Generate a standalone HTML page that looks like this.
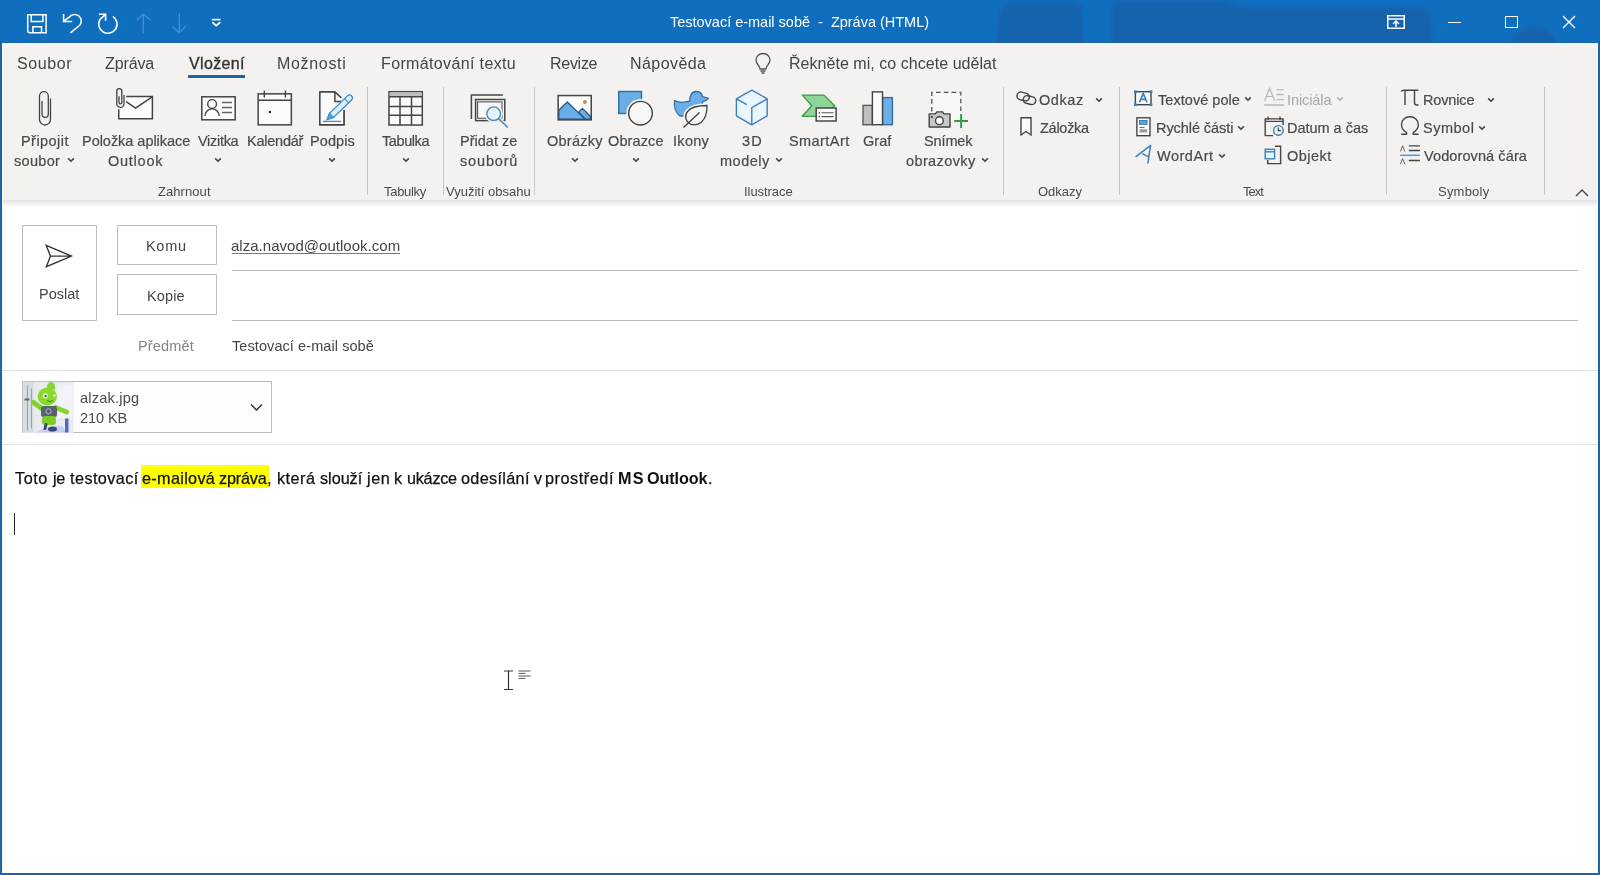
<!DOCTYPE html>
<html><head><meta charset="utf-8"><style>
html,body{margin:0;padding:0;width:1600px;height:875px;overflow:hidden;background:#fff;position:relative;font-family:'Liberation Sans', sans-serif}
.t{position:absolute;line-height:0;white-space:pre;will-change:transform}
svg{overflow:visible}
</style></head><body>
<div style="position:absolute;left:0px;top:0px;width:1600px;height:43px;background:#106ebe"></div>
<svg style="position:absolute;left:0px;top:0px;" width="1600" height="43" viewBox="0 0 1600 43" fill="none"><defs><filter id="tbl" x="-5%" y="-50%" width="110%" height="200%"><feGaussianBlur stdDeviation="1.5"/></filter></defs><g fill="#1564ad" filter="url(#tbl)"><path d="M1083 43 V8 Q1083 3 1060 3 H1015 Q997 3 997 25 V43 Z"/><path d="M1111 43 V12 Q1111 1 1125 1 H1221 L1250 8 H1420 Q1432 8 1432 25 V43 Z"/><path d="M1512 43 A22 16 0 0 1 1556 43 Z"/></g></svg>
<svg style="position:absolute;left:1386px;top:14px;" width="20" height="16" viewBox="0 0 20 16" fill="none"><rect x="1.75" y="1.75" width="16.5" height="12.5" stroke="#ffffff" stroke-width="1.5"/><path d="M2 5 H18" stroke="#ffffff" stroke-width="1.5"/><path d="M10 13 V7 M7 10 L10 7 L13 10" stroke="#ffffff" stroke-width="1.5"/></svg>
<div style="position:absolute;left:1448px;top:22px;width:13px;height:1.4px;background:#fff"></div>
<div style="position:absolute;left:1505px;top:16px;width:13px;height:12px;border:1.4px solid #fff;box-sizing:border-box"></div>
<svg style="position:absolute;left:1562px;top:15px;" width="14" height="14" viewBox="0 0 14 14" fill="none"><path d="M1 1 L13 13 M13 1 L1 13" stroke="#ffffff" stroke-width="1.4"/></svg>
<div style="position:absolute;left:0px;top:42px;width:1600px;height:1px;background:#1a62a6"></div>
<div style="position:absolute;left:0px;top:43px;width:2px;height:832px;background:#1f64a4"></div>
<div style="position:absolute;left:1598px;top:43px;width:2px;height:832px;background:#1f64a4"></div>
<div style="position:absolute;left:0px;top:873px;width:1600px;height:2px;background:#1f64a4"></div>
<div style="position:absolute;left:2px;top:43px;width:1596px;height:157px;background:#f3f2f1"></div>
<div style="position:absolute;left:2px;top:43px;width:1596px;height:1px;background:#eaf6fb"></div>
<div style="position:absolute;left:2px;top:200px;width:1596px;height:7px;background:linear-gradient(#e2e1e0,#fff)"></div>
<div style="position:absolute;left:188px;top:75px;width:57px;height:3px;background:#1a64b4"></div>
<svg style="position:absolute;left:754px;top:52px;" width="18" height="22" viewBox="0 0 18 22" fill="none"><path d="M9 1.5 C4.8 1.5 2 4.5 2 8 C2 10.5 3.2 12 4.5 13.5 C5.5 14.6 6 15.5 6 17 H12 C12 15.5 12.5 14.6 13.5 13.5 C14.8 12 16 10.5 16 8 C16 4.5 13.2 1.5 9 1.5 Z" stroke="#555" stroke-width="1.3"/><path d="M6.5 19 H11.5 M7.5 21 H10.5" stroke="#555" stroke-width="1.3"/></svg>
<div style="position:absolute;left:367px;top:87px;width:1px;height:108px;background:#c8c6c4"></div>
<div style="position:absolute;left:442.5px;top:87px;width:1px;height:108px;background:#c8c6c4"></div>
<div style="position:absolute;left:534px;top:87px;width:1px;height:108px;background:#c8c6c4"></div>
<div style="position:absolute;left:1002.5px;top:87px;width:1px;height:108px;background:#c8c6c4"></div>
<div style="position:absolute;left:1119px;top:87px;width:1px;height:108px;background:#c8c6c4"></div>
<div style="position:absolute;left:1386px;top:87px;width:1px;height:108px;background:#c8c6c4"></div>
<div style="position:absolute;left:1544px;top:87px;width:1px;height:108px;background:#c8c6c4"></div>
<svg style="position:absolute;left:66.5px;top:157px;" width="8" height="6" viewBox="0 0 8 6" fill="none"><path d="M1.2 1.4 L4 4.2 L6.8 1.4" stroke="#444" stroke-width="1.6"/></svg>
<svg style="position:absolute;left:214px;top:157px;" width="8" height="6" viewBox="0 0 8 6" fill="none"><path d="M1.2 1.4 L4 4.2 L6.8 1.4" stroke="#444" stroke-width="1.6"/></svg>
<svg style="position:absolute;left:328px;top:157px;" width="8" height="6" viewBox="0 0 8 6" fill="none"><path d="M1.2 1.4 L4 4.2 L6.8 1.4" stroke="#444" stroke-width="1.6"/></svg>
<svg style="position:absolute;left:401.5px;top:157px;" width="8" height="6" viewBox="0 0 8 6" fill="none"><path d="M1.2 1.4 L4 4.2 L6.8 1.4" stroke="#444" stroke-width="1.6"/></svg>
<svg style="position:absolute;left:570.5px;top:157px;" width="8" height="6" viewBox="0 0 8 6" fill="none"><path d="M1.2 1.4 L4 4.2 L6.8 1.4" stroke="#444" stroke-width="1.6"/></svg>
<svg style="position:absolute;left:631.5px;top:157px;" width="8" height="6" viewBox="0 0 8 6" fill="none"><path d="M1.2 1.4 L4 4.2 L6.8 1.4" stroke="#444" stroke-width="1.6"/></svg>
<svg style="position:absolute;left:774.5px;top:157px;" width="8" height="6" viewBox="0 0 8 6" fill="none"><path d="M1.2 1.4 L4 4.2 L6.8 1.4" stroke="#444" stroke-width="1.6"/></svg>
<svg style="position:absolute;left:980.5px;top:157px;" width="8" height="6" viewBox="0 0 8 6" fill="none"><path d="M1.2 1.4 L4 4.2 L6.8 1.4" stroke="#444" stroke-width="1.6"/></svg>
<svg style="position:absolute;left:1575px;top:188px;" width="14" height="9" viewBox="0 0 14 9" fill="none"><path d="M1 8 L7 2 L13 8" stroke="#444" stroke-width="1.4"/></svg>
<svg style="position:absolute;left:1094.5px;top:96.5px;" width="8" height="6" viewBox="0 0 8 6" fill="none"><path d="M1.2 1.4 L4 4.2 L6.8 1.4" stroke="#444" stroke-width="1.6"/></svg>
<svg style="position:absolute;left:1244px;top:96px;" width="8" height="6" viewBox="0 0 8 6" fill="none"><path d="M1.2 1.4 L4 4.2 L6.8 1.4" stroke="#444" stroke-width="1.6"/></svg>
<svg style="position:absolute;left:1237px;top:124.5px;" width="8" height="6" viewBox="0 0 8 6" fill="none"><path d="M1.2 1.4 L4 4.2 L6.8 1.4" stroke="#444" stroke-width="1.6"/></svg>
<svg style="position:absolute;left:1218px;top:152.5px;" width="8" height="6" viewBox="0 0 8 6" fill="none"><path d="M1.2 1.4 L4 4.2 L6.8 1.4" stroke="#444" stroke-width="1.6"/></svg>
<svg style="position:absolute;left:1486.5px;top:96.5px;" width="8" height="6" viewBox="0 0 8 6" fill="none"><path d="M1.2 1.4 L4 4.2 L6.8 1.4" stroke="#444" stroke-width="1.6"/></svg>
<svg style="position:absolute;left:1478px;top:124.5px;" width="8" height="6" viewBox="0 0 8 6" fill="none"><path d="M1.2 1.4 L4 4.2 L6.8 1.4" stroke="#444" stroke-width="1.6"/></svg>
<svg style="position:absolute;left:1336px;top:96px;" width="8" height="6" viewBox="0 0 8 6" fill="none"><path d="M1.2 1.4 L4 4.2 L6.8 1.4" stroke="#b0b0b0" stroke-width="1.6"/></svg>
<div style="position:absolute;left:2px;top:207px;width:1596px;height:666px;background:#fff"></div>
<div style="position:absolute;left:2px;top:200px;width:1px;height:673px;background:#eefaff"></div>
<div style="position:absolute;left:1597px;top:200px;width:1px;height:673px;background:#eefaff"></div>
<div style="position:absolute;left:22px;top:225px;width:75px;height:96px;border:1px solid #bdbdbd;box-sizing:border-box"></div>
<div style="position:absolute;left:117px;top:225px;width:100px;height:40px;border:1px solid #bdbdbd;box-sizing:border-box"></div>
<div style="position:absolute;left:117px;top:274px;width:100px;height:41px;border:1px solid #bdbdbd;box-sizing:border-box"></div>
<div style="position:absolute;left:232px;top:253px;width:168px;height:1px;background:#777"></div>
<div style="position:absolute;left:232px;top:270px;width:1346px;height:1px;background:#b9b9b9"></div>
<div style="position:absolute;left:232px;top:320px;width:1346px;height:1px;background:#b9b9b9"></div>
<div style="position:absolute;left:2px;top:370px;width:1596px;height:1px;background:#e3e3e3"></div>
<div style="position:absolute;left:22px;top:381px;width:250px;height:52px;border:1px solid #bdbdbd;box-sizing:border-box;background:#fdfdfd"></div>
<svg style="position:absolute;left:250px;top:403px;" width="13" height="9" viewBox="0 0 13 9" fill="none"><path d="M1 1.5 L6.5 7 L12 1.5" stroke="#333" stroke-width="1.5"/></svg>
<svg style="position:absolute;left:22.5px;top:381.5px;" width="50.5" height="51" viewBox="22.5 381.5 50.5 51" fill="none"><defs><filter id="tb" x="-10%" y="-10%" width="120%" height="120%"><feGaussianBlur stdDeviation="0.6"/></filter></defs><rect x="22.5" y="381.5" width="50.5" height="51" fill="#e8eaef"/><g filter="url(#tb)"><rect x="23" y="382" width="10" height="50" fill="#d8dbe0"/><path d="M27 385 V430 M31 388 V428" stroke="#9aa0a8" stroke-width="1"/><path d="M24 399 H29" stroke="#666" stroke-width="2"/><rect x="57" y="384" width="15" height="34" fill="#f2f3f7"/><path d="M36 432 Q48 424 62 426 L66 432 Z" fill="#c4cdf2"/><rect x="64.5" y="418" width="3.5" height="14" fill="#4d6cc8"/><path d="M46.5 389 Q46 381.5 50.5 381.5 Q55 381.5 54.6 389 Z" fill="#86d62e"/><ellipse cx="46.8" cy="396" rx="9.6" ry="9" fill="#8ad82f"/><path d="M33 402 L42 408.5" stroke="#82d02c" stroke-width="5" stroke-linecap="round"/><path d="M55 407 L66 411.5" stroke="#86d42e" stroke-width="5" stroke-linecap="round"/><rect x="40.5" y="405.5" width="16" height="11" rx="2.5" fill="#596370"/><circle cx="48" cy="410.8" r="2.6" stroke="#b8bccc" stroke-width="0.9"/><rect x="41.5" y="415.5" width="14" height="9" rx="3.5" fill="#7ccd28"/><path d="M45.5 424 L44.5 428" stroke="#3a4878" stroke-width="3" stroke-linecap="round"/><ellipse cx="52" cy="428.5" rx="4.5" ry="2.6" fill="#3a4878"/></g><circle cx="44.8" cy="395.3" r="2.6" fill="#e6f6d2"/><circle cx="45.2" cy="395.6" r="1.1" fill="#3a4450"/><circle cx="54" cy="395" r="1.3" fill="#d8f0c0"/><path d="M46.5 400 Q49.5 402.5 52.5 400" stroke="#3f7a10" stroke-width="0.9"/></svg>
<div style="position:absolute;left:2px;top:444px;width:1596px;height:1px;background:#e3e3e3"></div>
<div style="position:absolute;left:141px;top:465px;width:127.5px;height:22.5px;background:#ffff00"></div>
<div style="position:absolute;left:14px;top:513px;width:1px;height:22px;background:#222"></div>
<svg style="position:absolute;left:503px;top:670px;" width="30" height="21" viewBox="0 0 30 21" fill="none"><path d="M1 1 H10 M5.5 1 V19.5 M1 19.5 H10" stroke="#333" stroke-width="1.2"/><path d="M15.5 1 H27.5 M15.5 3.4 H22.5 M15.5 6 H27.5 M15.5 8.4 H22.5" stroke="#444" stroke-width="0.9"/></svg>
<svg style="position:absolute;left:0;top:0" width="1600" height="875" viewBox="0 0 1600 875" fill="none"><path d="M27.7 14.7 H46.1 V32.8 H30 Q27.7 32.8 27.7 30.5 Z" stroke="#fff" stroke-width="1.5"/><path d="M31.2 14.7 V21.4 H42.9 V14.7 M32.9 32.8 V26.8 H41.5 V32.8" stroke="#fff" stroke-width="1.5"/><path d="M63.6 13.9 V21.5 H72.2" stroke="#fff" stroke-width="1.6"/><path d="M64.2 20.9 L69.6 16.8 A6.6 6.6 0 0 1 79.7 25.3 L70.5 32.8" stroke="#fff" stroke-width="1.6"/><path d="M112.9 16.4 A9.2 9.2 0 1 1 99.9 19.5 L105.3 14.6" stroke="#fff" stroke-width="1.6"/><path d="M98.9 14.3 H105.6 V20.8" stroke="#fff" stroke-width="1.6"/><path d="M143.3 14 V33.3 M136.8 20.3 L143.3 13.9 L150.5 20.3" stroke="#3f8fdc" stroke-width="1.4"/><path d="M179.3 13.3 V32.7 M172.4 26.4 L179.3 32.7 L185.5 26.4" stroke="#3f8fdc" stroke-width="1.4"/><path d="M211.7 19.6 H220.5" stroke="#fff" stroke-width="1.6"/><path d="M212.3 22.2 L216.2 25.6 L220.2 22.2" stroke="#fff" stroke-width="1.8"/><path d="M50.5 98.6 V119.5 A5.5 5.5 0 0 1 39.5 119.5 V96 A4.4 4.4 0 0 1 48.3 96 V114.3 A3.15 3.15 0 0 1 42 114.3 V101" stroke="#444" stroke-width="1.3"/><path d="M126.2 96.5 H152.4 V118.8 H118.75 V109.3" stroke="#444" stroke-width="1.5" fill="#fbfbfb"/><path d="M118.75 109.3 V96.5 H126.2" fill="#fbfbfb"/><path d="M126.2 101.7 L135.6 108 L152.2 96.8" stroke="#444" stroke-width="1.5"/><path d="M124 95 V103.8 A3.6 3.6 0 0 1 116.8 103.8 V91.2 A2.5 2.5 0 0 1 121.8 91.2 V102.5 A1.4 1.4 0 0 1 119 102.5 V96.3" stroke="#444" stroke-width="1.3"/><rect x="201.8" y="96.8" width="33.4" height="23" fill="#fbfbfb" stroke="#444" stroke-width="1.5"/><circle cx="212.1" cy="104" r="4.4" stroke="#444" stroke-width="1.4"/><path d="M205 116 A7.1 7.1 0 0 1 219.2 116" stroke="#444" stroke-width="1.4"/><path d="M222 102.5 H232 M222 107.5 H232 M222 112.5 H232" stroke="#666" stroke-width="1.3"/><rect x="258.15" y="93.85" width="33.2" height="31" fill="#fbfbfb" stroke="#444" stroke-width="1.5"/><path d="M258 100.3 H291.5 M264.3 90.8 V97.4 M285.4 90.8 V97.4" stroke="#444" stroke-width="1.5"/><circle cx="269.9" cy="112" r="1.2" fill="#222"/><path d="M341.1 97.7 L334.9 92 H319.85 V124.85 H343.95 V110" stroke="#444" stroke-width="1.5" fill="#fbfbfb"/><path d="M319.85 92 V124.85 H343.95 V100 L334.9 92 Z" fill="#fbfbfb"/><path d="M341.1 97.7 L334.9 92 H319.85 V124.85 H343.95 V110 M334.9 92 V101.5 H341" stroke="#444" stroke-width="1.5"/><path d="M323 121.4 H341" stroke="#3d8fd0" stroke-width="1.3"/><g transform="translate(327.2,119.5) rotate(-44)"><path d="M0 0 L6 -2.9 H31 A2.9 2.9 0 0 1 31 2.9 H6 Z" fill="#d9effc" stroke="#3a8ccc" stroke-width="1.3"/><path d="M0 0 L6 -2.9 V2.9 Z" fill="#5aa2dc" stroke="#3a8ccc" stroke-width="1"/><path d="M27 -2.9 V2.9" stroke="#3a8ccc" stroke-width="1.2"/></g><rect x="389" y="91.7" width="33.3" height="33.3" fill="#fbfbfb" stroke="#444" stroke-width="1.5"/><rect x="389.7" y="92.4" width="31.9" height="4.2" fill="#bdbdbd"/><path d="M389 96.8 H422.3 M389 106.4 H422.3 M389 115.2 H422.3 M400 96.8 V125 M411.5 96.8 V125" stroke="#444" stroke-width="1.5"/><path d="M471.4 119.1 V95.1 H502.9" stroke="#444" stroke-width="1.5"/><rect x="475.6" y="99.5" width="29.2" height="21.1" stroke="#444" stroke-width="1.5" fill="#f8f8f8"/><rect x="477.6" y="101.9" width="24.4" height="16.3" stroke="#444" stroke-width="1"/><circle cx="493.7" cy="113.7" r="9" fill="#f3f2f1"/><path d="M499 119 L507.7 127.4" stroke="#f3f2f1" stroke-width="4"/><circle cx="493.7" cy="113.7" r="6.8" fill="#e3f4fc" stroke="#4b8bb8" stroke-width="1.4"/><path d="M498.6 118.6 L507.7 127.4" stroke="#4b8bb8" stroke-width="1.5"/><rect x="558.15" y="95.55" width="33.1" height="24.3" fill="#fbfbfb" stroke="#444" stroke-width="1.5"/><path d="M558.9 110 L567.3 102 L585 119.1 H558.9 Z" fill="#6aaee8" stroke="#25537d" stroke-width="1.2" stroke-linejoin="round"/><path d="M578.7 112.1 L582.4 108.4 L590.5 116.5 V119.1 H585.5 Z" fill="#6aaee8" stroke="#25537d" stroke-width="1.2" stroke-linejoin="round"/><path d="M558.9 119.1 H590.5" stroke="#25537d" stroke-width="0.1"/><circle cx="584.9" cy="102" r="2" fill="#c58a4d"/><rect x="618.7" y="91.5" width="22.8" height="22" fill="#6aaee8" stroke="#2f6fa8" stroke-width="1.4"/><circle cx="640.5" cy="113.2" r="14.2" fill="#f3f2f1"/><circle cx="640.5" cy="113.2" r="11.8" fill="#f7f7f7" stroke="#404040" stroke-width="1.4"/><path d="M674.5 100.6 C678 102.5 683 103 689.8 101.2 C689.2 96 692 91.5 696 91.5 C700 91.5 702 94 702.5 96.5 L708.3 98.3 C706.5 100.5 704 101.5 702.5 101.8 C703 108 699 113.5 692 115.8 L680 116 C676 113 673.5 107 674.5 100.6 Z" fill="#6aaee8" stroke="#2f6fa8" stroke-width="1.3" stroke-linejoin="round"/><path d="M707 105.5 C699 105.5 691 107 687.5 111.5 C684 116 686 122 690 123.8 C695 126 701 124 704 119 C706.5 115 707 110 707 105.5 Z" fill="#f3f2f1" stroke="#f3f2f1" stroke-width="4.5"/><path d="M707 105.5 C699 105.5 691 107 687.5 111.5 C684 116 686 122 690 123.8 C695 126 701 124 704 119 C706.5 115 707 110 707 105.5 Z" fill="#f7f7f7" stroke="#404040" stroke-width="1.3"/><path d="M683.5 127.5 L699.5 112.5" stroke="#404040" stroke-width="1.3"/><path d="M751.8 90.1 L767.2 98.8 V115.8 L751.8 124.9 L736.4 115.8 V98.8 Z" fill="#eaf6fd" stroke="#3f7fbf" stroke-width="1.4" stroke-linejoin="round"/><path d="M767.2 98.8 L751.8 107.6 V124.9 M736.4 98.8 L746.8 104.7" stroke="#3f7fbf" stroke-width="1.4"/><path d="M802.3 95.1 H824 L834.7 105.7 L824 116.3 H802.3 L811.8 105.7 Z" fill="#8fd49a" stroke="#3a9a4a" stroke-width="1.3" stroke-linejoin="round"/><rect x="816.2" y="108" width="19.9" height="13" fill="#fbfbfb" stroke="#444" stroke-width="1.5"/><circle cx="819.4" cy="112.8" r="0.8" fill="#444"/><circle cx="819.4" cy="116.6" r="0.8" fill="#444"/><path d="M821.4 112.8 H833.6 M821.4 116.6 H833.6" stroke="#555" stroke-width="1.1"/><rect x="863" y="105.4" width="9.4" height="19.3" fill="#bfbfbf" stroke="#5a5a5a" stroke-width="1.4"/><rect x="882.5" y="97.6" width="9.9" height="27.1" fill="#6bb0ea" stroke="#2e6ea6" stroke-width="1.4"/><rect x="872.4" y="91.9" width="10.1" height="32.8" fill="#fbfbfb" stroke="#444" stroke-width="1.4"/><rect x="931.8" y="92.3" width="29" height="28" fill="#f8f8f8"/><path d="M931.8 111.5 V92.3 H960.8 V113" stroke="#555" stroke-width="1.3" stroke-dasharray="4.6 3.2"/><path d="M929.2 113.9 H935.4 L936.8 111.9 H942.6 L944 113.9 H950 V127 H929.2 Z" fill="#c8c8c8" stroke="#404040" stroke-width="1.4" stroke-linejoin="round"/><circle cx="939.4" cy="120.7" r="3.9" fill="#fbfbfb" stroke="#404040" stroke-width="1.4"/><circle cx="931.9" cy="116.9" r="1" fill="#222"/><path d="M954.2 121 H968 M961.1 114.1 V127.9" stroke="#2e9a45" stroke-width="1.9"/><g transform="rotate(14 1023.2 96.45)"><rect x="1016.9" y="92.6" width="12.6" height="7.7" rx="3.85" stroke="#444" stroke-width="1.4"/></g><g transform="rotate(14 1029.5 100.1)"><rect x="1023.2" y="96.2" width="12.6" height="7.8" rx="3.9" stroke="#444" stroke-width="1.4"/></g><path d="M1021 117.8 H1031 V135 L1026 131.5 L1021 135 Z" fill="#fbfbfb" stroke="#444" stroke-width="1.4" stroke-linejoin="miter"/><rect x="1135.4" y="91.7" width="15.6" height="13" stroke="#444" stroke-width="1.4" fill="#fbfbfb"/><path d="M1139.6 102.3 L1143.25 93.4 L1146.9 102.3 M1140.8 99.3 H1145.7" stroke="#3b82c0" stroke-width="1.7"/><rect x="1134.0" y="90.3" width="2.8" height="2.8" fill="#3b82c0"/><rect x="1149.6" y="90.3" width="2.8" height="2.8" fill="#3b82c0"/><rect x="1134.0" y="103.3" width="2.8" height="2.8" fill="#3b82c0"/><rect x="1149.6" y="103.3" width="2.8" height="2.8" fill="#3b82c0"/><rect x="1136.9" y="117.8" width="13.1" height="17.9" fill="#fbfbfb" stroke="#444" stroke-width="1.4"/><rect x="1139.5" y="120.5" width="7.6" height="3.8" fill="#5aa2dc" stroke="#2f6fa8" stroke-width="0.8"/><path d="M1139.5 127.5 H1144.5" stroke="#3b82c0" stroke-width="1.1"/><rect x="1139.5" y="129.3" width="7.6" height="3.2" fill="#999"/><path d="M1135.6 156.8 L1150.6 145.4 L1147.8 163.6 M1142.2 153.6 L1148.4 156.6" stroke="#3b82c0" stroke-width="1.5" stroke-linejoin="round"/><path d="M1264.6 100.7 L1269.6 88.4 L1274.7 100.7 M1266.3 96.5 H1273" stroke="#b8b8b8" stroke-width="1.2"/><path d="M1276.5 89.7 H1283.8 M1276.5 94.5 H1283.8 M1276.5 99.7 H1283.8 M1264.2 105 H1283.8" stroke="#b8b8b8" stroke-width="1.3"/><path d="M1273 135.6 H1265.2 V118.9 H1283.1 V125" stroke="#444" stroke-width="1.4"/><path d="M1265.2 121.3 H1283.1 M1268 116.5 V120 M1280 116.5 V120" stroke="#444" stroke-width="1.3"/><circle cx="1278.4" cy="130.4" r="4.8" fill="#e3f4fc" stroke="#3d7fa8" stroke-width="1.4"/><path d="M1278.3 127.6 V130.6 H1280.8" stroke="#333" stroke-width="1.1"/><path d="M1267.7 160 V163.6 H1280.6 V146.3 H1275" stroke="#444" stroke-width="1.4"/><rect x="1265.2" y="149.3" width="9.4" height="9.5" fill="#e3f4fc" stroke="#3b82c0" stroke-width="1.4"/><path d="M1265.2 151.8 H1274.6" stroke="#3b82c0" stroke-width="1.4"/><path d="M1401.2 91.5 Q1402 90.2 1404 90.2 H1418.3 M1405 90.2 V105 M1414.5 90.2 V103 Q1414.5 105 1417 105 H1418.5" stroke="#444" stroke-width="1.4"/><path d="M1401.2 134.3 H1406.5 V132.5 C1403 130.5 1401.5 127.5 1401.5 124.5 C1401.5 120 1405 116.8 1409.9 116.8 C1414.8 116.8 1418.3 120 1418.3 124.5 C1418.3 127.5 1416.8 130.5 1413.3 132.5 V134.3 H1418.6" stroke="#444" stroke-width="1.4"/><path d="M1400.4 151.5 L1402.6 145.8 L1404.8 151.5 M1400.3 164.3 L1402.6 158.6 L1404.9 164.3" stroke="#555" stroke-width="0.9"/><path d="M1408.8 145.9 H1419.9 M1408.8 150.5 H1419.9 M1408.8 160.5 H1419.9" stroke="#444" stroke-width="1.3"/><path d="M1400.2 155.3 H1419.9" stroke="#4a9ad4" stroke-width="1.5"/><path d="M46.2 245.4 L71.5 256.1 L46.4 266.6 L50.5 256.1 Z M50.5 256.1 H71.5" stroke="#333" stroke-width="1.4" stroke-linejoin="miter"/></svg>
<div class="t" style="left:670.40px;top:22.32px;font-size:14.5px;color:#fff;font-weight:400;letter-spacing:-0.011px;">Testovací e-mail sobě  -  Zpráva (HTML)</div>
<div class="t" style="left:17.00px;top:63.80px;font-size:16px;color:#444;font-weight:400;letter-spacing:0.600px;">Soubor</div>
<div class="t" style="left:105.00px;top:63.80px;font-size:16px;color:#444;font-weight:400;letter-spacing:-0.120px;">Zpráva</div>
<div class="t" style="left:188.50px;top:63.80px;font-size:16px;color:#333;font-weight:400;letter-spacing:0.367px;-webkit-text-stroke:0.35px #333;">Vložení</div>
<div class="t" style="left:277.00px;top:63.80px;font-size:16px;color:#444;font-weight:400;letter-spacing:0.671px;">Možnosti</div>
<div class="t" style="left:380.90px;top:63.80px;font-size:16px;color:#444;font-weight:400;letter-spacing:0.363px;">Formátování textu</div>
<div class="t" style="left:550.00px;top:63.80px;font-size:16px;color:#444;font-weight:400;letter-spacing:-0.280px;">Revize</div>
<div class="t" style="left:629.50px;top:63.80px;font-size:16px;color:#444;font-weight:400;letter-spacing:0.429px;">Nápověda</div>
<div class="t" style="left:788.50px;top:63.80px;font-size:16px;color:#444;font-weight:400;letter-spacing:0.041px;">Řekněte mi, co chcete udělat</div>
<div class="t" style="left:21.30px;top:141.12px;font-size:14.5px;color:#4a4a4a;font-weight:400;letter-spacing:0.443px;-webkit-text-stroke:0.2px #4a4a4a;">Připojit</div>
<div class="t" style="left:13.80px;top:161.12px;font-size:14.5px;color:#4a4a4a;font-weight:400;letter-spacing:0.320px;-webkit-text-stroke:0.2px #4a4a4a;">soubor</div>
<div class="t" style="left:81.50px;top:141.12px;font-size:14.5px;color:#4a4a4a;font-weight:400;letter-spacing:-0.033px;-webkit-text-stroke:0.2px #4a4a4a;">Položka aplikace</div>
<div class="t" style="left:107.50px;top:161.12px;font-size:14.5px;color:#4a4a4a;font-weight:400;letter-spacing:0.750px;-webkit-text-stroke:0.2px #4a4a4a;">Outlook</div>
<div class="t" style="left:197.50px;top:141.12px;font-size:14.5px;color:#4a4a4a;font-weight:400;letter-spacing:-0.300px;-webkit-text-stroke:0.2px #4a4a4a;">Vizitka</div>
<div class="t" style="left:246.60px;top:141.12px;font-size:14.5px;color:#4a4a4a;font-weight:400;letter-spacing:-0.229px;-webkit-text-stroke:0.2px #4a4a4a;">Kalendář</div>
<div class="t" style="left:309.50px;top:141.12px;font-size:14.5px;color:#4a4a4a;font-weight:400;letter-spacing:0.100px;-webkit-text-stroke:0.2px #4a4a4a;">Podpis</div>
<div class="t" style="left:382.00px;top:141.12px;font-size:14.5px;color:#4a4a4a;font-weight:400;letter-spacing:-0.417px;-webkit-text-stroke:0.2px #4a4a4a;">Tabulka</div>
<div class="t" style="left:459.70px;top:141.12px;font-size:14.5px;color:#4a4a4a;font-weight:400;letter-spacing:0.012px;-webkit-text-stroke:0.2px #4a4a4a;">Přidat ze</div>
<div class="t" style="left:460.00px;top:161.12px;font-size:14.5px;color:#4a4a4a;font-weight:400;letter-spacing:0.833px;-webkit-text-stroke:0.2px #4a4a4a;">souborů</div>
<div class="t" style="left:546.50px;top:141.12px;font-size:14.5px;color:#4a4a4a;font-weight:400;letter-spacing:0.250px;-webkit-text-stroke:0.2px #4a4a4a;">Obrázky</div>
<div class="t" style="left:607.50px;top:141.12px;font-size:14.5px;color:#4a4a4a;font-weight:400;letter-spacing:0.117px;-webkit-text-stroke:0.2px #4a4a4a;">Obrazce</div>
<div class="t" style="left:672.80px;top:141.12px;font-size:14.5px;color:#4a4a4a;font-weight:400;letter-spacing:0.300px;-webkit-text-stroke:0.2px #4a4a4a;">Ikony</div>
<div class="t" style="left:741.80px;top:141.12px;font-size:14.5px;color:#4a4a4a;font-weight:400;letter-spacing:1.200px;-webkit-text-stroke:0.2px #4a4a4a;">3D</div>
<div class="t" style="left:719.50px;top:161.12px;font-size:14.5px;color:#4a4a4a;font-weight:400;letter-spacing:0.500px;-webkit-text-stroke:0.2px #4a4a4a;">modely</div>
<div class="t" style="left:789.30px;top:141.12px;font-size:14.5px;color:#4a4a4a;font-weight:400;letter-spacing:0.429px;-webkit-text-stroke:0.2px #4a4a4a;">SmartArt</div>
<div class="t" style="left:863.20px;top:141.12px;font-size:14.5px;color:#4a4a4a;font-weight:400;letter-spacing:0.067px;-webkit-text-stroke:0.2px #4a4a4a;">Graf</div>
<div class="t" style="left:923.50px;top:141.12px;font-size:14.5px;color:#4a4a4a;font-weight:400;letter-spacing:-0.120px;-webkit-text-stroke:0.2px #4a4a4a;">Snímek</div>
<div class="t" style="left:905.90px;top:161.12px;font-size:14.5px;color:#4a4a4a;font-weight:400;letter-spacing:0.388px;-webkit-text-stroke:0.2px #4a4a4a;">obrazovky</div>
<div class="t" style="left:158.00px;top:191.95px;font-size:13px;color:#4a4a4a;font-weight:400;letter-spacing:0.071px;">Zahrnout</div>
<div class="t" style="left:383.80px;top:191.95px;font-size:13px;color:#4a4a4a;font-weight:400;letter-spacing:-0.300px;">Tabulky</div>
<div class="t" style="left:446.20px;top:191.95px;font-size:13px;color:#4a4a4a;font-weight:400;letter-spacing:-0.008px;">Využití obsahu</div>
<div class="t" style="left:743.60px;top:191.95px;font-size:13px;color:#4a4a4a;font-weight:400;letter-spacing:-0.062px;">Ilustrace</div>
<div class="t" style="left:1038.40px;top:191.95px;font-size:13px;color:#4a4a4a;font-weight:400;letter-spacing:-0.020px;">Odkazy</div>
<div class="t" style="left:1242.80px;top:191.95px;font-size:13px;color:#4a4a4a;font-weight:400;letter-spacing:-1.000px;">Text</div>
<div class="t" style="left:1438.40px;top:191.95px;font-size:13px;color:#4a4a4a;font-weight:400;letter-spacing:0.217px;">Symboly</div>
<div class="t" style="left:1039.00px;top:100.12px;font-size:14.5px;color:#4a4a4a;font-weight:400;letter-spacing:0.575px;-webkit-text-stroke:0.2px #4a4a4a;">Odkaz</div>
<div class="t" style="left:1040.00px;top:127.92px;font-size:14.5px;color:#4a4a4a;font-weight:400;letter-spacing:-0.267px;-webkit-text-stroke:0.2px #4a4a4a;">Záložka</div>
<div class="t" style="left:1157.50px;top:100.02px;font-size:14.5px;color:#4a4a4a;font-weight:400;letter-spacing:0.045px;-webkit-text-stroke:0.2px #4a4a4a;">Textové pole</div>
<div class="t" style="left:1156.00px;top:127.83px;font-size:14.5px;color:#4a4a4a;font-weight:400;letter-spacing:-0.073px;-webkit-text-stroke:0.2px #4a4a4a;">Rychlé části</div>
<div class="t" style="left:1157.00px;top:155.73px;font-size:14.5px;color:#4a4a4a;font-weight:400;letter-spacing:0.517px;-webkit-text-stroke:0.2px #4a4a4a;">WordArt</div>
<div class="t" style="left:1287.20px;top:127.83px;font-size:14.5px;color:#4a4a4a;font-weight:400;letter-spacing:-0.020px;-webkit-text-stroke:0.2px #4a4a4a;">Datum a čas</div>
<div class="t" style="left:1286.90px;top:155.73px;font-size:14.5px;color:#4a4a4a;font-weight:400;letter-spacing:0.480px;-webkit-text-stroke:0.2px #4a4a4a;">Objekt</div>
<div class="t" style="left:1422.80px;top:100.02px;font-size:14.5px;color:#4a4a4a;font-weight:400;letter-spacing:-0.150px;-webkit-text-stroke:0.2px #4a4a4a;">Rovnice</div>
<div class="t" style="left:1422.80px;top:127.83px;font-size:14.5px;color:#4a4a4a;font-weight:400;letter-spacing:0.500px;-webkit-text-stroke:0.2px #4a4a4a;">Symbol</div>
<div class="t" style="left:1423.80px;top:155.73px;font-size:14.5px;color:#4a4a4a;font-weight:400;letter-spacing:0.100px;-webkit-text-stroke:0.2px #4a4a4a;">Vodorovná čára</div>
<div class="t" style="left:1286.90px;top:100.02px;font-size:14.5px;color:#a8a8a8;font-weight:400;letter-spacing:-0.086px;">Iniciála</div>
<div class="t" style="left:38.80px;top:293.93px;font-size:14.5px;color:#444;font-weight:400;letter-spacing:0.020px;">Poslat</div>
<div class="t" style="left:146.40px;top:245.93px;font-size:14.5px;color:#444;font-weight:400;letter-spacing:0.700px;">Komu</div>
<div class="t" style="left:147.00px;top:295.68px;font-size:14.5px;color:#444;font-weight:400;letter-spacing:0.150px;">Kopie</div>
<div class="t" style="left:138.00px;top:346.43px;font-size:14.5px;color:#858585;font-weight:400;letter-spacing:0.167px;">Předmět</div>
<div class="t" style="left:231.00px;top:246.15px;font-size:15px;color:#444;font-weight:400;letter-spacing:0.024px;">alza.navod@outlook.com</div>
<div class="t" style="left:232.00px;top:345.93px;font-size:14.5px;color:#444;font-weight:400;letter-spacing:0.080px;">Testovací e-mail sobě</div>
<div class="t" style="left:80.00px;top:398.32px;font-size:14.5px;color:#4a4a4a;font-weight:400;letter-spacing:0.225px;">alzak.jpg</div>
<div class="t" style="left:80.00px;top:418.03px;font-size:14.5px;color:#4a4a4a;font-weight:400;letter-spacing:-0.080px;">210 KB</div>
<div class="t" style="left:15.10px;top:477.63px;font-size:16.2px;color:#111;font-weight:400;letter-spacing:0.567px;-webkit-text-stroke:0.25px #111;">Toto</div>
<div class="t" style="left:53.20px;top:477.63px;font-size:16.2px;color:#111;font-weight:400;letter-spacing:-0.400px;-webkit-text-stroke:0.25px #111;">je</div>
<div class="t" style="left:69.90px;top:477.63px;font-size:16.2px;color:#111;font-weight:400;letter-spacing:0.438px;-webkit-text-stroke:0.25px #111;">testovací</div>
<div class="t" style="left:141.50px;top:477.63px;font-size:16.2px;color:#111;font-weight:400;letter-spacing:0.337px;-webkit-text-stroke:0.25px #111;">e-mailová</div>
<div class="t" style="left:219.10px;top:477.63px;font-size:16.2px;color:#111;font-weight:400;letter-spacing:-0.160px;-webkit-text-stroke:0.25px #111;">zpráva</div>
<div class="t" style="left:267.10px;top:477.63px;font-size:16.2px;color:#111;font-weight:400;letter-spacing:0.000px;-webkit-text-stroke:0.25px #111;">,</div>
<div class="t" style="left:277.10px;top:477.63px;font-size:16.2px;color:#111;font-weight:400;letter-spacing:0.475px;-webkit-text-stroke:0.25px #111;">která</div>
<div class="t" style="left:320.00px;top:477.63px;font-size:16.2px;color:#111;font-weight:400;letter-spacing:-0.020px;-webkit-text-stroke:0.25px #111;">slouží</div>
<div class="t" style="left:367.30px;top:477.63px;font-size:16.2px;color:#111;font-weight:400;letter-spacing:0.550px;-webkit-text-stroke:0.25px #111;">jen</div>
<div class="t" style="left:394.00px;top:477.63px;font-size:16.2px;color:#111;font-weight:400;letter-spacing:0.000px;-webkit-text-stroke:0.25px #111;">k</div>
<div class="t" style="left:406.50px;top:477.63px;font-size:16.2px;color:#111;font-weight:400;letter-spacing:-0.240px;-webkit-text-stroke:0.25px #111;">ukázce</div>
<div class="t" style="left:460.80px;top:477.63px;font-size:16.2px;color:#111;font-weight:400;letter-spacing:0.337px;-webkit-text-stroke:0.25px #111;">odesílání</div>
<div class="t" style="left:534.40px;top:477.63px;font-size:16.2px;color:#111;font-weight:400;letter-spacing:0.000px;-webkit-text-stroke:0.25px #111;">v</div>
<div class="t" style="left:545.20px;top:477.63px;font-size:16.2px;color:#111;font-weight:400;letter-spacing:0.562px;-webkit-text-stroke:0.25px #111;">prostředí</div>
<div class="t" style="left:708.00px;top:477.63px;font-size:16.2px;color:#111;font-weight:400;letter-spacing:0.000px;-webkit-text-stroke:0.25px #111;">.</div>
<div class="t" style="left:617.70px;top:477.63px;font-size:16.2px;color:#111;font-weight:700;letter-spacing:1.200px;">MS</div>
<div class="t" style="left:647.00px;top:477.63px;font-size:16.2px;color:#111;font-weight:700;letter-spacing:-0.117px;">Outlook</div>
</body></html>
